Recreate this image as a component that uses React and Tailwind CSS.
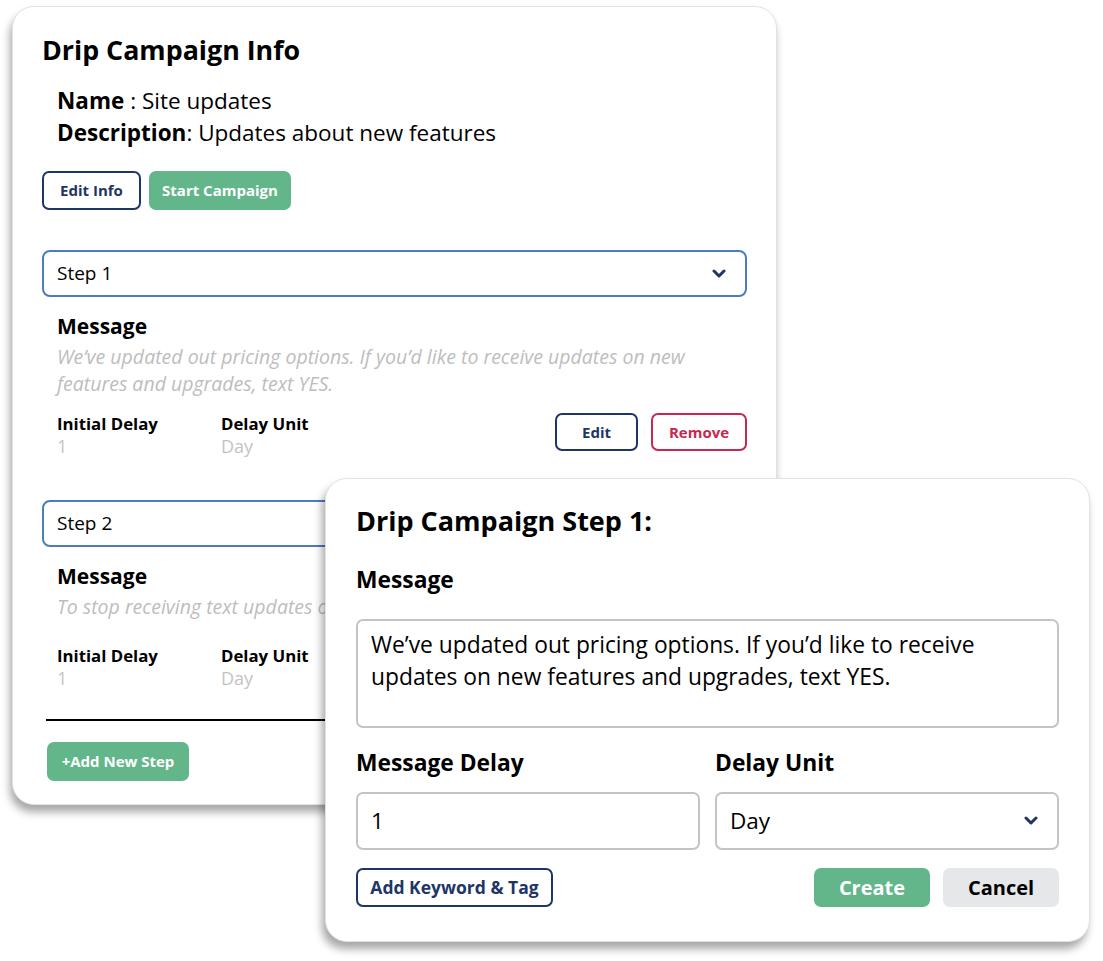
import React from "react";

const font = { fontFamily: '"Open Sans", "Noto Sans", sans-serif' };

function Chevron() {
  return (
    <svg width="14" height="10" viewBox="0 0 14 10" className="shrink-0">
      <polyline points="2,2 7,7 12,2" fill="none" stroke="#1f3566" strokeWidth="3" strokeLinecap="round" strokeLinejoin="round" />
    </svg>
  );
}

function StepSelect({ label }) {
  return (
    <div className="flex h-[47px] w-full items-center justify-between rounded-[8px] border-2 border-[#4a7cc0] pl-[13px] pr-[19px]">
      <span className="text-[19px] text-black">{label}</span>
      <Chevron />
    </div>
  );
}

function StepDetails({ message, wide, actions }) {
  return (
    <div>
      <div className="ml-[15px] mt-[15px] text-[21px] font-bold leading-[28px] text-black">Message</div>
      <p className="ml-[15px] mt-[3px] text-[19.5px] italic leading-[27px] text-[#bdbdbd]">{message}</p>
      <div className={`flex items-start justify-between ${wide ? "mt-[24px]" : "mt-[15px]"}`}>
        <div className="ml-[15px] flex">
          <div className="w-[164px]">
            <div className="text-[16.8px] font-bold leading-[23px] text-black">Initial Delay</div>
            <div className="text-[18px] leading-[23px] text-[#c4c4c4]">1</div>
          </div>
          <div>
            <div className="text-[16.8px] font-bold leading-[23px] text-black">Delay Unit</div>
            <div className="text-[18px] leading-[23px] text-[#c4c4c4]">Day</div>
          </div>
        </div>
        {actions}
      </div>
    </div>
  );
}

export default function App() {
  return (
    <div className="relative h-[961px] w-[1103px] overflow-hidden bg-white" style={font}>
      {/* campaign info card */}
      <div className="absolute left-[12px] top-[6px] h-[799px] w-[765px] rounded-[22px] border border-[#e2e2e2] bg-white px-[29px] pt-[26px] shadow-[-2px_7px_9px_rgba(0,0,0,0.35)]">
        <h1 className="text-[26.8px] font-bold leading-[34px] text-black">Drip Campaign Info</h1>
        <div className="ml-[15px] mt-[18px] text-[22.5px] leading-[32px] text-black">
          <div><span className="font-bold">Name</span> : Site updates</div>
          <div><span className="font-bold">Description</span>: Updates about new features</div>
        </div>
        <div className="mt-[22px] flex gap-[8px]">
          <button className="h-[39px] w-[99px] rounded-[7px] border-2 border-[#1f3566] text-[15px] font-bold text-[#1f3566]">Edit Info</button>
          <button className="h-[39px] w-[142px] rounded-[7px] bg-[#62b68a] text-[15px] font-bold text-white">Start Campaign</button>
        </div>

        <div className="mt-[40px]">
          <StepSelect label="Step 1" />
          <StepDetails
            message="We’ve updated out pricing options. If you’d like to receive updates on new features and upgrades, text YES."
            actions={
              <div className="flex gap-[13px] pt-[1px]">
                <button className="h-[38px] w-[83px] rounded-[7px] border-2 border-[#1f3566] text-[15px] font-bold text-[#1f3566]">Edit</button>
                <button className="h-[38px] w-[96px] rounded-[7px] border-2 border-[#c8274f] text-[15px] font-bold text-[#c8274f]">Remove</button>
              </div>
            }
          />
        </div>

        <div className="mt-[42px]">
          <StepSelect label="Step 2" />
          <StepDetails wide message="To stop receiving text updates on new features, text STOP." />
        </div>

        <div className="ml-[4px] mt-[29px] h-[2px] bg-black" />
        <button className="ml-[5px] mt-[21px] h-[39px] w-[142px] rounded-[7px] bg-[#62b68a] text-[15px] font-bold text-white">+Add New Step</button>
      </div>

      {/* step editor card */}
      <div className="absolute left-[325px] top-[478px] h-[464px] w-[765px] rounded-[22px] border border-[#e2e2e2] bg-white px-[30px] pt-[25px] shadow-[-3px_7px_9px_rgba(0,0,0,0.35)]">
        <h2 className="text-[27px] font-bold leading-[34px] text-black">Drip Campaign Step 1:</h2>
        <div className="mt-[27px] text-[22.8px] font-bold leading-[30px] text-black">Message</div>
        <div className="mt-[24px] h-[109px] w-full rounded-[7px] border-2 border-[#c4c4c4] px-[13px] pt-[8px] text-[22.8px] leading-[32px] text-black">
          We’ve updated out pricing options. If you’d like to receive updates on new features and upgrades, text YES.
        </div>
        <div className="mt-[20px] grid grid-cols-2 gap-x-[15px]">
          <div>
            <div className="text-[22.8px] font-bold leading-[30px] text-black">Message Delay</div>
            <div className="mt-[14px] flex h-[58px] items-center rounded-[7px] border-2 border-[#c4c4c4] px-[13px] text-[22.5px] text-black">1</div>
          </div>
          <div>
            <div className="text-[22.8px] font-bold leading-[30px] text-black">Delay Unit</div>
            <div className="mt-[14px] flex h-[58px] items-center justify-between rounded-[7px] border-2 border-[#c4c4c4] pl-[13px] pr-[19px] text-[22.5px] text-black">
              <span>Day</span>
              <Chevron />
            </div>
          </div>
        </div>
        <div className="mt-[18px] flex items-center justify-between">
          <button className="h-[39px] w-[197px] rounded-[7px] border-2 border-[#1f3566] text-[17.5px] font-bold text-[#1f3566]">Add Keyword &amp; Tag</button>
          <div className="flex gap-[13px]">
            <button className="h-[39px] w-[116px] rounded-[7px] bg-[#62b68a] text-[20px] font-bold text-white">Create</button>
            <button className="h-[39px] w-[116px] rounded-[7px] bg-[#e6e7e9] text-[20px] font-bold text-black">Cancel</button>
          </div>
        </div>
      </div>
    </div>
  );
}
